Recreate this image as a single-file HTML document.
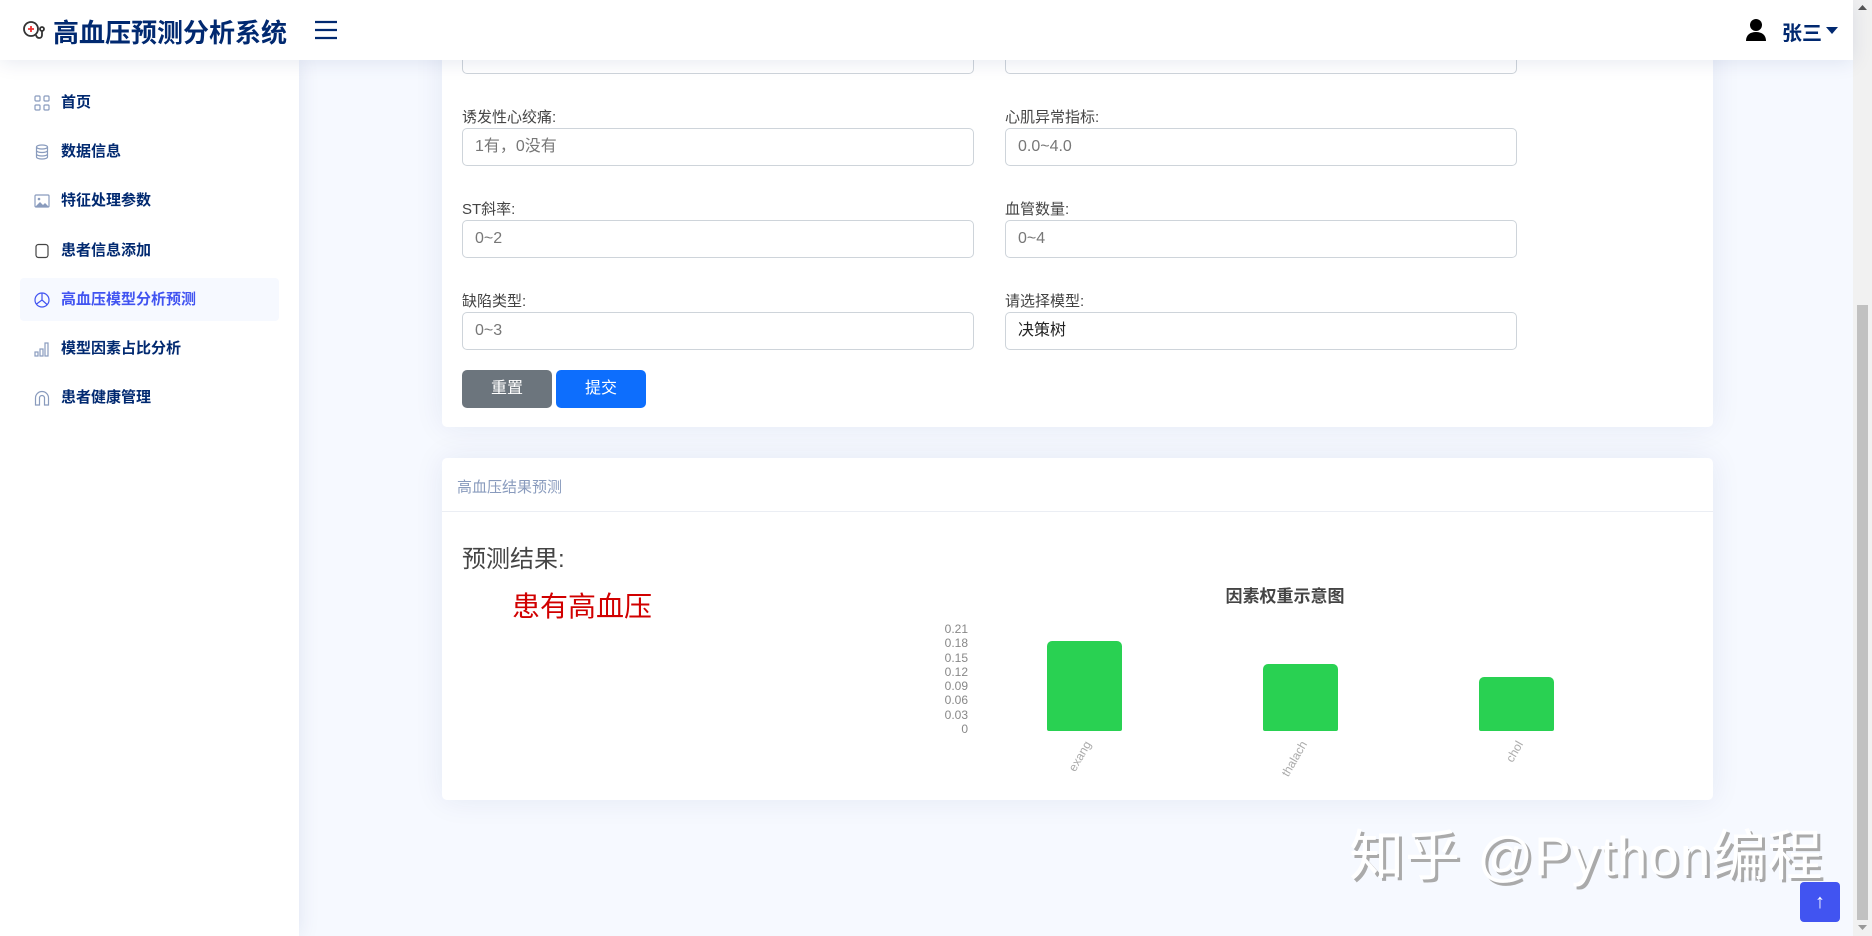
<!DOCTYPE html>
<html><head><meta charset="utf-8">
<style>
*{box-sizing:border-box;margin:0;padding:0}
body{width:1872px;height:936px;overflow:hidden;background:#f6f9ff;font-family:"Liberation Sans","Noto Sans CJK SC",sans-serif;position:relative}
.header{position:absolute;left:0;top:0;width:1853px;height:60px;background:#fff;box-shadow:0 2px 20px rgba(1,41,112,.1);z-index:5}
.title{position:absolute;left:53px;top:13px;font-size:26px;font-weight:700;color:#012970}
.sidebar{position:absolute;left:0;top:60px;width:299px;height:876px;background:#fff;box-shadow:0 0 20px rgba(1,41,112,.1)}
.item{position:absolute;left:20px;width:259px;height:43px;font-size:15px;font-weight:600;color:#012970;line-height:43px;padding-left:41px;border-radius:4px}
.item svg{position:absolute;left:14px;top:14px}
.item.act{background:#f6f9ff;color:#4154f1}
.card{position:absolute;left:442px;width:1271px;background:#fff;border-radius:5px;box-shadow:0 0 30px rgba(1,41,112,.08)}
.lbl{position:absolute;font-size:15px;color:#444}
.inp{position:absolute;width:512px;height:38px;border:1px solid #ced4da;border-radius:5px;font-size:16px;color:#777;line-height:36px;padding-left:12px;background:#fff}
.btn{position:absolute;top:370px;height:38px;width:90px;border-radius:5px;color:#fff;font-size:16px;text-align:center;line-height:38px}
.yl{position:absolute;right:904px;font-size:12px;color:#888;font-weight:300}
.bar{position:absolute;width:75px;background:#29d152;border-radius:5px 5px 2px 2px}
.xl{position:absolute;font-size:12px;color:#aaa;transform:rotate(-60deg);transform-origin:right center;text-align:right;width:60px}
</style></head><body>
<div class="sidebar">
 <div class="item" style="top:21px"><svg width="16" height="16" viewBox="0 0 16 16" fill="none" stroke="#899bbd" stroke-width="1.2"><rect x="1" y="1" width="5" height="5" rx="1"/><rect x="10" y="1" width="5" height="5" rx="1"/><rect x="1" y="10" width="5" height="5" rx="1"/><rect x="10" y="10" width="5" height="5" rx="1"/></svg>首页</div>
 <div class="item" style="top:70px"><svg width="16" height="16" viewBox="0 0 16 16" fill="none" stroke="#899bbd" stroke-width="1.2"><ellipse cx="8" cy="3" rx="5.5" ry="2"/><path d="M2.5 3v10c0 1.1 2.5 2 5.5 2s5.5-.9 5.5-2V3M2.5 6.5c0 1.1 2.5 2 5.5 2s5.5-.9 5.5-2M2.5 10c0 1.1 2.5 2 5.5 2s5.5-.9 5.5-2"/></svg>数据信息</div>
 <div class="item" style="top:119px"><svg width="16" height="16" viewBox="0 0 16 16"><rect x="1" y="2" width="14" height="12" rx="1" fill="none" stroke="#899bbd" stroke-width="1.2"/><path d="M1 14l5-5 3 3 2-2 4 4z" fill="#899bbd"/><circle cx="5" cy="6" r="1.3" fill="#899bbd"/></svg>特征处理参数</div>
 <div class="item" style="top:169px"><svg width="16" height="16" viewBox="0 0 16 16"><rect x="2" y="1.5" width="12" height="13" rx="2.5" fill="none" stroke="#444" stroke-width="1.2"/></svg>患者信息添加</div>
 <div class="item act" style="top:218px"><svg width="16" height="16" viewBox="0 0 16 16" fill="none" stroke="#4154f1" stroke-width="1.2"><circle cx="8" cy="8" r="7"/><path d="M8 1v7l5 4.5M8 8l-5.5 4"/></svg>高血压模型分析预测</div>
 <div class="item" style="top:267px"><svg width="16" height="16" viewBox="0 0 16 16" fill="none" stroke="#899bbd" stroke-width="1.2"><rect x="1" y="11" width="3" height="4"/><rect x="6" y="8" width="3" height="7"/><rect x="11" y="2" width="3" height="13"/></svg>模型因素占比分析</div>
 <div class="item" style="top:316px"><svg width="16" height="16" viewBox="0 0 16 16" fill="none" stroke="#899bbd" stroke-width="1.2"><path d="M1.5 15V8a6.5 6.5 0 0 1 13 0v7h-4V8a2.5 2.5 0 0 0-5 0v7z"/></svg>患者健康管理</div>
</div>

<div class="card" style="top:20px;height:407px">
 <div class="inp" style="left:20px;top:16px">0~1</div>
 <div class="inp" style="left:563px;top:16px">100~200</div>
 <div class="lbl" style="left:20px;top:86px">诱发性心绞痛:</div>
 <div class="inp" style="left:20px;top:108px">1有，0没有</div>
 <div class="lbl" style="left:563px;top:86px">心肌异常指标:</div>
 <div class="inp" style="left:563px;top:108px">0.0~4.0</div>
 <div class="lbl" style="left:20px;top:178px">ST斜率:</div>
 <div class="inp" style="left:20px;top:200px">0~2</div>
 <div class="lbl" style="left:563px;top:178px">血管数量:</div>
 <div class="inp" style="left:563px;top:200px">0~4</div>
 <div class="lbl" style="left:20px;top:270px">缺陷类型:</div>
 <div class="inp" style="left:20px;top:292px">0~3</div>
 <div class="lbl" style="left:563px;top:270px">请选择模型:</div>
 <div class="inp" style="left:563px;top:292px;color:#222">决策树</div>
</div>
<div class="btn" style="left:462px;background:#6c757d">重置</div>
<div class="btn" style="left:556px;background:#0d6efd">提交</div>

<div class="card" style="top:458px;height:342px">
 <div style="position:absolute;left:15px;top:18px;font-size:15px;color:#899bbd">高血压结果预测</div>
 <div style="position:absolute;left:0;top:53px;width:100%;border-top:1px solid #ebeef4"></div>
 <div style="position:absolute;left:20px;top:81px;font-size:24px;color:#444">预测结果:</div>
 <div style="position:absolute;left:70px;top:127px;font-size:28px;color:#d10000">患有高血压</div>
</div>
<div style="position:absolute;left:1185px;top:582px;width:200px;text-align:center;font-size:17px;font-weight:700;color:#444">因素权重示意图</div>
<div class="yl" style="top:622px">0.21</div>
<div class="yl" style="top:636px">0.18</div>
<div class="yl" style="top:651px">0.15</div>
<div class="yl" style="top:665px">0.12</div>
<div class="yl" style="top:679px">0.09</div>
<div class="yl" style="top:693px">0.06</div>
<div class="yl" style="top:708px">0.03</div>
<div class="yl" style="top:722px">0</div>
<div class="bar" style="left:1047px;top:641px;height:90px"></div>
<div class="bar" style="left:1263px;top:664px;height:67px"></div>
<div class="bar" style="left:1479px;top:677px;height:54px"></div>
<div class="xl" style="left:1028px;top:735px">exang</div>
<div class="xl" style="left:1244px;top:735px">thalach</div>
<div class="xl" style="left:1460px;top:735px">chol</div>

<div class="header">
 <svg style="position:absolute;left:22px;top:20px" width="24" height="24" viewBox="0 0 24 24" fill="none" stroke="#333" stroke-width="1.8"><circle cx="9" cy="9" r="7"/><path d="M9 6v6M6 9h6" stroke="#e33"/><path d="M14 15c1 4 6 4 6 0v-4"/><circle cx="20" cy="9" r="2"/></svg>
 <div class="title">高血压预测分析系统</div>
 <svg style="position:absolute;left:314px;top:19px" width="24" height="22" viewBox="0 0 24 22" stroke="#012970" stroke-width="2.2"><path d="M1 3h22M1 11h22M1 19h22"/></svg>
 <svg style="position:absolute;left:1746px;top:18px" width="20" height="24" viewBox="0 0 20 24" fill="#000"><circle cx="10" cy="7" r="6"/><path d="M0 23c0-6 4-9 10-9s10 3 10 9z"/></svg>
 <div style="position:absolute;left:1782px;top:17px;font-size:20px;font-weight:700;color:#012970">张三</div>
 <svg style="position:absolute;left:1826px;top:27px" width="12" height="7" viewBox="0 0 12 7"><path d="M0 0h12L6 7z" fill="#012970"/></svg>
</div>

<div style="position:absolute;left:1349px;top:811px;font-size:55px;color:#fff;text-shadow:3px 3px 0 #aaa;letter-spacing:1px;white-space:nowrap">知乎 @Python编程</div>
<div style="position:absolute;left:1800px;top:882px;width:40px;height:40px;background:#4154f1;border-radius:4px;color:#fff;text-align:center;line-height:40px;font-size:20px;font-weight:700">↑</div>

<div style="position:absolute;left:1853px;top:0;width:19px;height:936px;background:#f1f1f1"></div>
<div style="position:absolute;left:1857px;top:305px;width:11px;height:615px;background:#c1c1c1"></div>
<svg style="position:absolute;left:1858px;top:5px" width="9" height="5"><path d="M0 5h9L4.5 0z" fill="#555"/></svg>
<svg style="position:absolute;left:1858px;top:925px" width="9" height="5"><path d="M0 0h9L4.5 5z" fill="#999"/></svg>
</body></html>
